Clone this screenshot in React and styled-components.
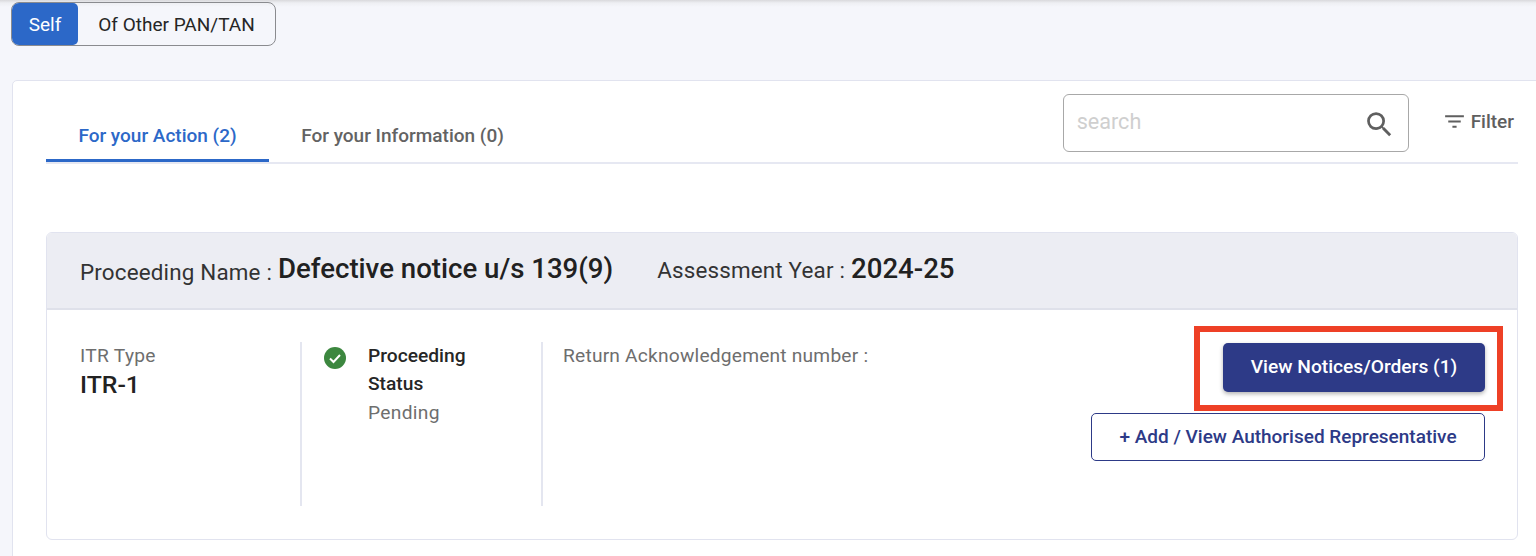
import React from "react";
import styled, { createGlobalStyle } from "styled-components";
import { MdSearch, MdFilterList } from "react-icons/md";

const GlobalStyle = createGlobalStyle`
  html, body {
    margin: 0;
    padding: 0;
    height: 556px;
    overflow: hidden;
    background: #f5f6fb;
    font-family: Roboto, "Liberation Sans", sans-serif;
  }
`;

const Page = styled.div`
  width: 1536px;
  height: 556px;
  overflow: hidden;
  padding-top: 2px;
  box-sizing: border-box;
  background: linear-gradient(#d9d9dc, #eeeff3 3px, #f5f6fb 7px);
`;

const Toggle = styled.div`
  display: inline-flex;
  margin-left: 11px;
  height: 44px;
  box-sizing: border-box;
  border: 1.5px solid #8a8b8f;
  border-radius: 8px;
  overflow: hidden;
  vertical-align: top;
`;

const ToggleItem = styled.div`
  display: flex;
  align-items: center;
  justify-content: center;
  width: ${({ $w }) => $w}px;
  font-size: 19px;
  color: ${({ $active }) => ($active ? "#fff" : "#262626")};
  background: ${({ $active }) => ($active ? "#2c68c8" : "transparent")};
  border-radius: ${({ $active }) => ($active ? "0 5px 5px 0" : "0")};
`;

const Panel = styled.div`
  width: 1560px;
  height: 500px;
  margin: 34px 0 0 12px;
  padding-left: 33px;
  box-sizing: border-box;
  background: #fff;
  border: 1px solid #e1e3ef;
  border-radius: 5px 0 0 0;
`;

const TabRow = styled.div`
  display: flex;
  width: 1472px;
  height: 83px;
  box-sizing: border-box;
  border-bottom: 2px solid #e6e8f2;
`;

const Tab = styled.div`
  display: flex;
  align-items: center;
  justify-content: center;
  width: ${({ $w }) => $w}px;
  height: ${({ $active }) => ($active ? 81 : 83)}px;
  box-sizing: border-box;
  padding-top: ${({ $active }) => ($active ? 30 : 25)}px;
  font-size: 19px;
  font-weight: 500;
  color: ${({ $active }) => ($active ? "#2c68c8" : "#636363")};
  border-bottom: ${({ $active }) => ($active ? "3px solid #2c68c8" : "none")};
`;

const Tools = styled.div`
  display: flex;
  align-items: flex-start;
  margin-left: auto;
  padding: 13px 4px 0 0;
`;

const SearchBox = styled.div`
  display: flex;
  align-items: center;
  justify-content: space-between;
  width: 346px;
  height: 58px;
  box-sizing: border-box;
  padding: 2px 12px 0 13px;
  background: #fff;
  border: 1.5px solid #a8a8a8;
  border-radius: 6px;
  color: #5f5f5f;
`;

const Placeholder = styled.span`
  font-size: 21.6px;
  color: #cfcfcf;
  margin-top: -5px;
`;

const FilterBtn = styled.div`
  display: flex;
  align-items: center;
  gap: 4px;
  margin-left: 33px;
  height: 54px;
  font-size: 19px;
  font-weight: 500;
  color: #5f5f5f;
`;

const Card = styled.div`
  width: 1472px;
  height: 308px;
  margin-top: 68px;
  box-sizing: border-box;
  border: 1.5px solid #e1e3ef;
  border-radius: 6px;
  overflow: hidden;
`;

const CardHead = styled.div`
  display: flex;
  align-items: baseline;
  height: 77px;
  box-sizing: border-box;
  padding: 19px 0 0 33px;
  background: #ecedf3;
  border-bottom: 2px solid #dfe1ea;
`;

const HeadLabel = styled.span`
  font-size: 22.4px;
  letter-spacing: 0.18px;
  color: #333;
  transform: translateY(${({ $drop }) => $drop || 0}px);
`;

const HeadValue = styled.span`
  font-size: 27.6px;
  font-weight: 500;
  color: #212121;
  margin-left: 6px;
  margin-right: ${({ $mr }) => $mr || 0}px;
`;

const CardBody = styled.div`
  display: flex;
  padding: 32px 32px 0 33px;
`;

const TypeCol = styled.div`
  width: 220px;
  height: 164px;
  border-right: 2px solid #e4e6f0;
  flex-shrink: 0;
`;

const Muted = styled.div`
  font-size: 19.2px;
  line-height: 28px;
  letter-spacing: 0.3px;
  color: #6e6e6e;
`;

const TypeValue = styled.div`
  font-size: 24.8px;
  font-weight: 500;
  line-height: 30px;
  color: #222;
`;

const StatusCol = styled.div`
  display: flex;
  gap: 22px;
  width: 241px;
  height: 164px;
  box-sizing: border-box;
  padding-left: 22px;
  border-right: 2px solid #e4e6f0;
  flex-shrink: 0;
`;

const StatusIcon = styled.svg`
  width: 22px;
  height: 22px;
  margin-top: 5px;
  flex-shrink: 0;
`;

const StatusText = styled.div`
  display: flex;
  flex-direction: column;
  gap: 1px;
`;

const StatusLabel = styled.div`
  font-size: 19.2px;
  font-weight: 500;
  line-height: 28px;
  color: #262626;
`;

const ReturnCol = styled.div`
  flex: 1;
  padding-left: 20px;
  font-size: 19.2px;
  line-height: 28px;
  letter-spacing: 0.2px;
  color: #6e6e6e;
`;

const Actions = styled.div`
  display: flex;
  flex-direction: column;
  align-items: flex-end;
  gap: 21px;
  padding-top: 1px;
  position: relative;
`;

const Highlight = styled.div`
  position: absolute;
  top: -16px;
  right: -18px;
  width: 309px;
  height: 85px;
  box-sizing: border-box;
  border: 6.5px solid #ee4026;
  pointer-events: none;
`;

const PrimaryBtn = styled.button`
  width: 262px;
  height: 49px;
  padding: 0 0 2px;
  border: none;
  border-radius: 5px;
  background: #2d3a87;
  color: #fff;
  font-family: inherit;
  font-size: 19.2px;
  font-weight: 500;
  box-shadow: 0 2px 4px rgba(0, 0, 0, 0.3);
`;

const OutlineBtn = styled.button`
  width: 394px;
  height: 48px;
  padding: 0 0 2px;
  box-sizing: border-box;
  border: 1.5px solid #2d3a87;
  border-radius: 5px;
  background: #fff;
  color: #2d3a87;
  font-family: inherit;
  font-size: 19px;
  font-weight: 500;
`;

export default function App() {
  return (
    <Page>
      <GlobalStyle />
      <Toggle>
        <ToggleItem $active $w={66}>Self</ToggleItem>
        <ToggleItem $w={197}>Of Other PAN/TAN</ToggleItem>
      </Toggle>
      <Panel>
        <TabRow>
          <Tab $active $w={223}>For your Action (2)</Tab>
          <Tab $w={267}>For your Information (0)</Tab>
          <Tools>
            <SearchBox>
              <Placeholder>search</Placeholder>
              <MdSearch size={33} />
            </SearchBox>
            <FilterBtn>
              <MdFilterList size={25} />
              Filter
            </FilterBtn>
          </Tools>
        </TabRow>
        <Card>
          <CardHead>
            <HeadLabel $drop={2}>Proceeding Name :</HeadLabel>
            <HeadValue $mr={44}>Defective notice u/s 139(9)</HeadValue>
            <HeadLabel>Assessment Year :</HeadLabel>
            <HeadValue>2024-25</HeadValue>
          </CardHead>
          <CardBody>
            <TypeCol>
              <Muted>ITR Type</Muted>
              <TypeValue>ITR-1</TypeValue>
            </TypeCol>
            <StatusCol>
              <StatusIcon viewBox="0 0 22 22">
                <circle cx="11" cy="11" r="11" fill="#3c873f" />
                <path d="M6 11.5l3.5 3.5L16 8" fill="none" stroke="#fff" strokeWidth="2" />
              </StatusIcon>
              <StatusText>
                <StatusLabel>Proceeding<br />Status</StatusLabel>
                <Muted>Pending</Muted>
              </StatusText>
            </StatusCol>
            <ReturnCol>Return Acknowledgement number :</ReturnCol>
            <Actions>
              <Highlight />
              <PrimaryBtn>View Notices/Orders (1)</PrimaryBtn>
              <OutlineBtn>+ Add / View Authorised Representative</OutlineBtn>
            </Actions>
          </CardBody>
        </Card>
      </Panel>
    </Page>
  );
}
